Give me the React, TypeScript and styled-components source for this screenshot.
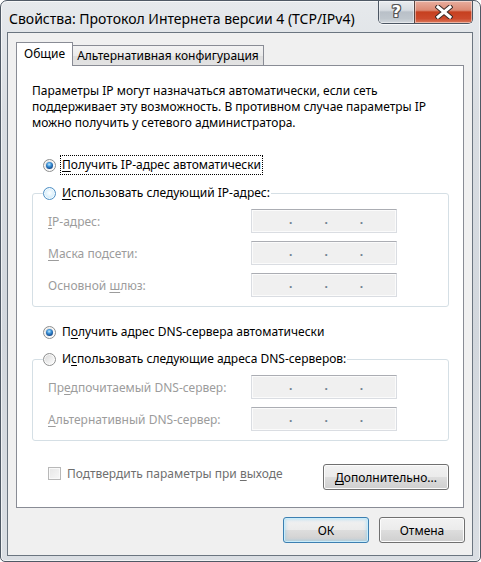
import React from "react";
import styled, { createGlobalStyle } from "styled-components";

const font = `"Noto Sans", "Open Sans", sans-serif`;

const GlobalStyle = createGlobalStyle`
  * { box-sizing: border-box; }
  html, body { margin: 0; padding: 0; background: #ffffff; }
  body { font-family: ${font}; font-size: 12px; color: #000; }
`;

const Window = styled.div`
  width: 481px;
  height: 562px;
  display: flex;
  flex-direction: column;
  padding: 0 7px 5px 6px;
  border: 1px solid #4f5965;
  border-radius: 7px 7px 5px 5px;
  background: linear-gradient(180deg, #e6e9ec 0%, #d9dde2 20%, #d2d7dd 60%, #dadee3 100%);
  box-shadow: inset 0 0 0 1px rgba(255, 255, 255, 0.65);
`;

const TitleBar = styled.div`
  height: 32px;
  display: flex;
  align-items: flex-start;
  justify-content: space-between;
`;

const Title = styled.div`
  padding: 8px 0 0 2px;
  font-size: 14px;
  line-height: 20px;
  color: #000;
  white-space: nowrap;
`;

const CaptionGroup = styled.div`
  display: flex;
  height: 23px;
  border: 1px solid #4c5663;
  border-top: none;
  border-radius: 0 0 5px 5px;
  overflow: hidden;
  box-shadow: 0 1px 0 rgba(255, 255, 255, 0.7);
`;

const CaptionButton = styled.div<{ $close?: boolean }>`
  width: ${(p) => (p.$close ? "58px" : "35px")};
  display: flex;
  align-items: center;
  justify-content: center;
  border-left: ${(p) => (p.$close ? "1px solid #5a4540" : "none")};
  background: ${(p) =>
    p.$close
      ? "linear-gradient(180deg, #e8ae9f 0%, #dc8a74 42%, #c6401f 50%, #cc4a2c 80%, #dc7a5c 100%)"
      : "linear-gradient(180deg, #e9ecef 0%, #d7dce1 42%, #b9c0c8 50%, #bfc6cd 80%, #d3d8dd 100%)"};
  box-shadow: inset 0 0 0 1px rgba(255, 255, 255, 0.45);
`;

const HelpGlyph = styled.span`
  font-family: "DejaVu Sans", sans-serif;
  font-weight: bold;
  font-size: 16px;
  line-height: 16px;
  color: #ffffff;
  text-shadow: 1px 0 0 #555, -1px 0 0 #555, 0 1px 0 #555, 0 -1px 0 #555, 1px 1px 0 #555,
    -1px -1px 0 #555, 1px -1px 0 #555, -1px 1px 0 #555;
`;

const Client = styled.div`
  flex: 1;
  display: flex;
  flex-direction: column;
  padding: 9px 8px 12px 8px;
  background: #f0f0f0;
  border: 1px solid #6b7580;
`;

const TabStrip = styled.div`
  display: flex;
  align-items: flex-end;
  height: 24px;
  margin-bottom: -1px;
  position: relative;
  z-index: 1;
`;

const Tab = styled.div<{ $active?: boolean }>`
  border: 1px solid #898c95;
  border-bottom: none;
  white-space: nowrap;
  ${(p) =>
    p.$active
      ? `
    height: 24px;
    padding: 2px 7px 0 7px;
    line-height: 18px;
    background: #ffffff;
    position: relative;
    z-index: 2;
  `
      : `
    height: 20px;
    margin-bottom: 1px;
    margin-left: -1px;
    padding: 2px 4px 0 4px;
    line-height: 16px;
    background: linear-gradient(180deg, #f3f3f3 0%, #ebebeb 50%, #dedede 51%, #e3e3e3 100%);
  `}
`;

const Panel = styled.div`
  display: flex;
  flex-direction: column;
  padding: 17px 14px 17px 15px;
  background: #ffffff;
  border: 1px solid #898c95;
`;

const Description = styled.p`
  margin: 0;
  line-height: 16px;
  white-space: nowrap;
`;

const RadioRow = styled.div<{ $gap?: number }>`
  display: flex;
  align-items: center;
  gap: 5px;
  height: 18px;
  margin-top: ${(p) => p.$gap ?? 0}px;
  padding-left: 11px;
`;

const Radio = styled.span<{ $checked?: boolean; $hot?: boolean }>`
  position: relative;
  flex: none;
  width: 13px;
  height: 13px;
  border-radius: 50%;
  border: 1px solid ${(p) => (p.$hot ? "#4f8fc4" : "#8e8f8f")};
  background: ${(p) =>
    p.$hot
      ? "radial-gradient(circle at 50% 45%, #ffffff 0%, #e6f5fd 35%, #b6dff6 100%)"
      : "linear-gradient(135deg, #d6d6d6 0%, #eeeeee 55%, #ffffff 100%)"};
  box-shadow: inset 0 0 0 1px rgba(255, 255, 255, 0.8);

  &::after {
    content: "";
    display: ${(p) => (p.$checked ? "block" : "none")};
    position: absolute;
    inset: 2px;
    border-radius: 50%;
    background: radial-gradient(circle at 45% 35%, #bfe9ff 0%, #3d93d8 35%, #154f93 70%, #0b2d5a 100%);
  }
`;

const RadioText = styled.span<{ $focused?: boolean }>`
  padding: 1px 1px;
  line-height: 16px;
  white-space: nowrap;
  outline: ${(p) => (p.$focused ? "1px dotted #000" : "none")};
`;

const Group = styled.fieldset`
  margin: 0;
  min-width: 0;
  padding: 7px 15px 9px 10px;
  border: 1px solid #d5dfe5;
  border-radius: 3px;
`;

const GroupHeader = styled.legend`
  display: flex;
  align-items: center;
  gap: 5px;
  height: 18px;
  padding: 0;
`;

const GroupFrame = styled.div<{ $gap: number }>`
  margin-top: ${(p) => p.$gap}px;
`;

const FieldList = styled.div`
  display: flex;
  flex-direction: column;
  gap: 8px;
  padding-left: 5px;
`;

const FieldRow = styled.div`
  display: flex;
  align-items: center;
  height: 24px;
`;

const FieldLabel = styled.span`
  flex: 0 0 203px;
  color: #9c9c9c;
  white-space: nowrap;
`;

const IpBox = styled.div`
  width: 146px;
  height: 24px;
  display: flex;
  gap: 32px;
  padding-left: 37px;
  border: 1px solid #dadde2;
  border-top-color: #abadb3;
  background: #f0f0f0;
  box-shadow: inset 0 0 0 1px #fbfbfb;
  color: #6e8191;
  line-height: 20px;
  font-weight: bold;
`;

const BottomRow = styled.div`
  display: flex;
  align-items: flex-start;
  justify-content: space-between;
  margin-top: 23px;
  padding-left: 16px;
`;

const CheckLabel = styled.label`
  display: flex;
  align-items: center;
  gap: 6px;
  height: 18px;
  color: #6f6f6f;
  white-space: nowrap;
`;

const CheckBox = styled.span`
  flex: none;
  width: 13px;
  height: 13px;
  border: 1px solid #b8b8b8;
  background: linear-gradient(135deg, #e6e6e6 0%, #f7f7f7 100%);
  box-shadow: inset 0 0 0 1px #f9f9f9;
`;

const PushButton = styled.button<{ $width: number; $default?: boolean }>`
  width: ${(p) => p.$width}px;
  height: 26px;
  padding: 0;
  font-family: ${font};
  font-size: 12px;
  color: #000;
  border-radius: 3px;
  border: 1px solid ${(p) => (p.$default ? "#3c7fb1" : "#707070")};
  background: linear-gradient(180deg, #f2f2f2 0%, #ebebeb 50%, #dddddd 51%, #cfcfcf 100%);
  box-shadow: ${(p) =>
    p.$default
      ? "inset 0 0 0 1px #c8ecfb, inset 0 0 3px 2px rgba(110, 200, 245, 0.35)"
      : "inset 0 0 0 1px #fcfcfc"};
`;

const Footer = styled.div`
  display: flex;
  justify-content: flex-end;
  gap: 10px;
  margin-top: 9px;
  margin-right: -1px;
`;

const U = styled.span`
  text-decoration: underline;
  text-underline-offset: 2px;
`;

const CloseIcon = () => (
  <svg width="18" height="14" viewBox="0 0 18 14">
    <path d="M3 2 L15 12 M15 2 L3 12" stroke="#3b2b28" strokeWidth="5" strokeLinecap="square" />
    <path d="M3 2 L15 12 M15 2 L3 12" stroke="#ffffff" strokeWidth="3" strokeLinecap="square" />
  </svg>
);

const IpField = () => (
  <IpBox>
    <span>.</span>
    <span>.</span>
    <span>.</span>
  </IpBox>
);

export default function App() {
  return (
    <>
      <GlobalStyle />
      <Window>
        <TitleBar>
          <Title>Свойства: Протокол Интернета версии 4 (TCP/IPv4)</Title>
          <CaptionGroup>
            <CaptionButton>
              <HelpGlyph>?</HelpGlyph>
            </CaptionButton>
            <CaptionButton $close>
              <CloseIcon />
            </CaptionButton>
          </CaptionGroup>
        </TitleBar>
        <Client>
          <TabStrip>
            <Tab $active>Общие</Tab>
            <Tab>Альтернативная конфигурация</Tab>
          </TabStrip>
          <Panel>
            <Description>
              Параметры IP могут назначаться автоматически, если сеть
              <br />
              поддерживает эту возможность. В противном случае параметры IP
              <br />
              можно получить у сетевого администратора.
            </Description>

            <RadioRow $gap={25}>
              <Radio $checked />
              <RadioText $focused>
                <U>П</U>олучить IP-адрес автоматически
              </RadioText>
            </RadioRow>

            <GroupFrame $gap={10}>
              <Group>
                <GroupHeader>
                  <Radio $hot />
                  <RadioText>
                    <U>И</U>спользовать следующий IP-адрес:
                  </RadioText>
                </GroupHeader>
                <FieldList>
                  <FieldRow>
                    <FieldLabel>
                      <U>I</U>P-адрес:
                    </FieldLabel>
                    <IpField />
                  </FieldRow>
                  <FieldRow>
                    <FieldLabel>
                      <U>М</U>аска подсети:
                    </FieldLabel>
                    <IpField />
                  </FieldRow>
                  <FieldRow>
                    <FieldLabel>
                      Основной <U>ш</U>люз:
                    </FieldLabel>
                    <IpField />
                  </FieldRow>
                </FieldList>
              </Group>
            </GroupFrame>

            <RadioRow $gap={16}>
              <Radio $checked />
              <RadioText>
                П<U>о</U>лучить адрес DNS-сервера автоматически
              </RadioText>
            </RadioRow>

            <GroupFrame $gap={9}>
              <Group>
                <GroupHeader>
                  <Radio />
                  <RadioText>
                    И<U>с</U>пользовать следующие адреса DNS-серверов:
                  </RadioText>
                </GroupHeader>
                <FieldList>
                  <FieldRow>
                    <FieldLabel>
                      Пр<U>е</U>дпочитаемый DNS-сервер:
                    </FieldLabel>
                    <IpField />
                  </FieldRow>
                  <FieldRow>
                    <FieldLabel>
                      <U>А</U>льтернативный DNS-сервер:
                    </FieldLabel>
                    <IpField />
                  </FieldRow>
                </FieldList>
              </Group>
            </GroupFrame>

            <BottomRow>
              <CheckLabel>
                <CheckBox />
                <span>
                  Подтвердить параметры при <U>в</U>ыходе
                </span>
              </CheckLabel>
              <PushButton $width={126}>
                <U>Д</U>ополнительно...
              </PushButton>
            </BottomRow>
          </Panel>
          <Footer>
            <PushButton $width={86} $default>
              ОК
            </PushButton>
            <PushButton $width={86}>Отмена</PushButton>
          </Footer>
        </Client>
      </Window>
    </>
  );
}
